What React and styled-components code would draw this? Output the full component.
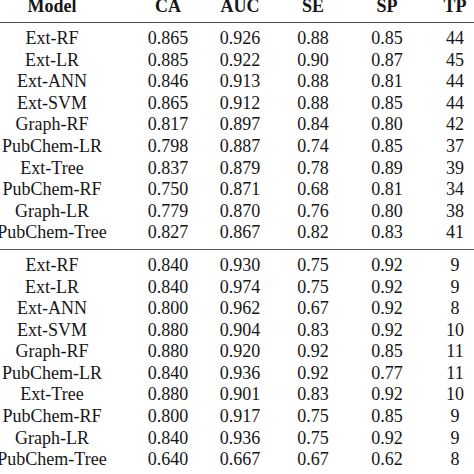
import React from 'react';
import styled, { createGlobalStyle } from 'styled-components';

const GlobalStyle = createGlobalStyle`
  html, body {
    margin: 0;
    padding: 0;
    background: #ffffff;
    overflow: hidden;
  }
`;

const headers = ['Model', 'CA', 'AUC', 'SE', 'SP', 'TP'];

const groups = [
  [
    ['Ext-RF', '0.865', '0.926', '0.88', '0.85', '44'],
    ['Ext-LR', '0.885', '0.922', '0.90', '0.87', '45'],
    ['Ext-ANN', '0.846', '0.913', '0.88', '0.81', '44'],
    ['Ext-SVM', '0.865', '0.912', '0.88', '0.85', '44'],
    ['Graph-RF', '0.817', '0.897', '0.84', '0.80', '42'],
    ['PubChem-LR', '0.798', '0.887', '0.74', '0.85', '37'],
    ['Ext-Tree', '0.837', '0.879', '0.78', '0.89', '39'],
    ['PubChem-RF', '0.750', '0.871', '0.68', '0.81', '34'],
    ['Graph-LR', '0.779', '0.870', '0.76', '0.80', '38'],
    ['PubChem-Tree', '0.827', '0.867', '0.82', '0.83', '41'],
  ],
  [
    ['Ext-RF', '0.840', '0.930', '0.75', '0.92', '9'],
    ['Ext-LR', '0.840', '0.974', '0.75', '0.92', '9'],
    ['Ext-ANN', '0.800', '0.962', '0.67', '0.92', '8'],
    ['Ext-SVM', '0.880', '0.904', '0.83', '0.92', '10'],
    ['Graph-RF', '0.880', '0.920', '0.92', '0.85', '11'],
    ['PubChem-LR', '0.840', '0.936', '0.92', '0.77', '11'],
    ['Ext-Tree', '0.880', '0.901', '0.83', '0.92', '10'],
    ['PubChem-RF', '0.800', '0.917', '0.75', '0.85', '9'],
    ['Graph-LR', '0.840', '0.936', '0.75', '0.92', '9'],
    ['PubChem-Tree', '0.640', '0.667', '0.67', '0.62', '8'],
  ],
];

export default function App() {
  return (
    <>
      <GlobalStyle />
      <Table>
        <HeadRow>
          {headers.map((h) => (
            <Cell key={h}>{h}</Cell>
          ))}
        </HeadRow>

        {groups.map((rows, gi) => (
          <Group key={gi} $divider={gi < groups.length - 1}>
            {rows.map((row, ri) => (
              <Row key={ri}>
                {row.map((value, ci) => (
                  <Cell key={ci}>{value}</Cell>
                ))}
              </Row>
            ))}
          </Group>
        ))}
      </Table>
    </>
  );
}

const Table = styled.div`
  display: flex;
  flex-direction: column;
  margin-top: -4px;

  font-family: 'Liberation Serif', 'Times New Roman', serif;
  font-size: 18px;
  line-height: 21.6px;
  color: #161616;
`;

const Row = styled.div`
  display: grid;
  grid-template-columns: 104px 128px 16px 130px 18px 118px;
`;

const HeadRow = styled(Row)`
  font-weight: bold;
  padding-bottom: 4.8px;
  border-bottom: 1px solid #4a4a4a;
`;

const Group = styled.div`
  padding-top: 4.6px;
  padding-bottom: ${(p) => (p.$divider ? '5.4px' : '0')};
  border-bottom: ${(p) => (p.$divider ? '1.6px solid #555555' : 'none')};
`;

const Cell = styled.div`
  display: flex;
  justify-content: center;
  white-space: nowrap;
`;
